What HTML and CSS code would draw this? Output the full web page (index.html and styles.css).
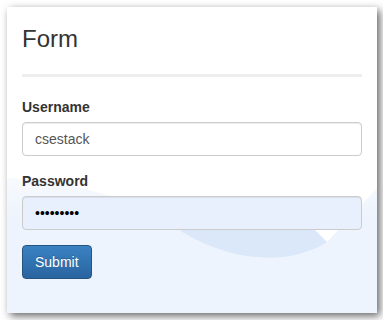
FILE: index.html
```html
<!DOCTYPE html>
<html>
<head>
  <title>Form</title>
  <link rel="stylesheet" href="styles.css">
</head>
<body>
  <div class="card">
    <h2>Form</h2>
    <hr>
    <form onsubmit="return false">
      <div class="form-group">
        <label for="username">Username</label>
        <input id="username" type="text" value="csestack">
      </div>
      <div class="form-group">
        <label for="password">Password</label>
        <input id="password" class="filled" type="password" value="123456789">
      </div>
      <button class="submit" type="submit">Submit</button>
    </form>
  </div>
</body>
</html>
```

FILE: styles.css
```css
body {
  font-family: "Liberation Sans", Arial, sans-serif;
  font-size: 14px;
  line-height: 20px;
  color: #333;
  background-color: #ffffff;
  margin: 0;
  padding: 7px;
}

.card {
  box-sizing: border-box;
  width: 370px;
  height: 306px;
  padding: 19px 15px 15px;
  background-color: #ffffff;
  background-image: url("data:image/svg+xml,%3Csvg xmlns='http://www.w3.org/2000/svg' width='370' height='306'%3E%3Cdefs%3E%3ClinearGradient id='g' x1='0' y1='0' x2='0' y2='1'%3E%3Cstop offset='0' stop-color='%23f7fafe'/%3E%3Cstop offset='0.3' stop-color='%23eef4fd'/%3E%3C/linearGradient%3E%3C/defs%3E%3Cpath d='M0,171 C60,173 120,190 160,215 L300,215 L320,235 L370,181 L370,306 L0,306 Z' fill='url(%23g)'/%3E%3Cpath d='M160,215 C175,225 190,235 215,243 C240,252 275,253 295,246 C305,243 313,240 320,235 L300,215 Z' fill='%23dae8fa'/%3E%3C/svg%3E");
  background-repeat: no-repeat;
  box-shadow: 3px 3px 8px rgba(0, 0, 0, 0.6);
}

h2 {
  font-size: 24px;
  font-weight: normal;
  line-height: 26px;
  margin: 0;
  color: #333;
}

hr {
  border: 0;
  border-top: 3px solid #eeeeee;
  margin: 22px 0 20px;
}

.form-group {
  margin-bottom: 15px;
}

label {
  display: block;
  font-weight: bold;
  margin-bottom: 5px;
}

input {
  display: block;
  box-sizing: border-box;
  width: 100%;
  height: 34px;
  padding: 6px 12px;
  font-family: inherit;
  font-size: 14px;
  color: #555;
  background-color: #ffffff;
  border: 1px solid #cccccc;
  border-radius: 4px;
  box-shadow: inset 0 1px 1px rgba(0, 0, 0, 0.075);
}

input.filled {
  background-color: #e8f0fe;
  color: #000;
}

button.submit {
  height: 34px;
  padding: 6px 12px;
  font-family: inherit;
  font-size: 14px;
  color: #ffffff;
  background-image: linear-gradient(to bottom, #3a82c2 0%, #2a64a0 100%);
  border: 1px solid #245580;
  border-radius: 4px;
  text-shadow: 0 -1px 0 rgba(0, 0, 0, 0.2);
}
```
